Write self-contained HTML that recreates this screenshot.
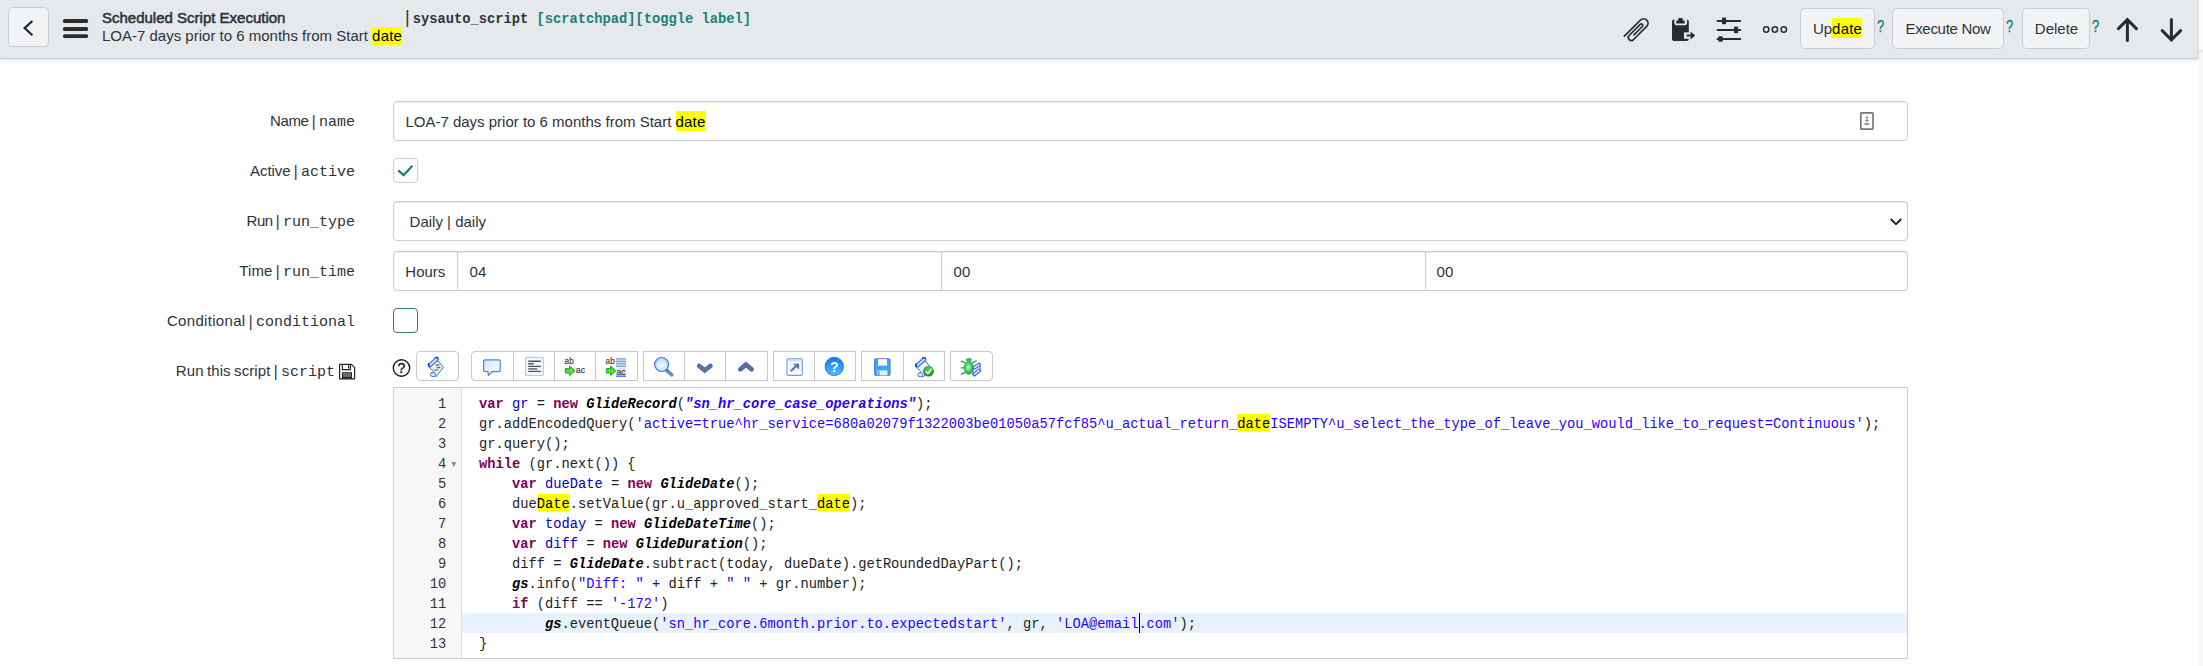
<!DOCTYPE html>
<html lang="en">
<head>
<meta charset="utf-8">
<title>Scheduled Script Execution</title>
<style>
*{box-sizing:border-box;margin:0;padding:0}
html,body{width:2203px;height:666px;overflow:hidden;background:#fff}
body{position:relative;font-family:"Liberation Sans",sans-serif;font-size:15px;color:#2e3338}
.abs{position:absolute}
.mono{font-family:"Liberation Mono",monospace}
mark{background:#ffff00;color:#000;padding:0 0 1px;letter-spacing:.2px}
/* scrollbar strip */
#sbar{left:2198px;top:0;width:5px;height:666px;background:#fafafa}
#sbar i{position:absolute;left:0;top:50px;width:5px;height:616px;background:linear-gradient(#e4e4e4,#f8f8f8 4px,#f8f8f8)}
/* header */
#hdr{left:0;top:0;width:2198px;height:59px;background:#e6e9eb;border-right:1px solid #d6dadd;border-bottom:1px solid #c9c9c9;box-shadow:0 1px 3px rgba(0,0,0,.12)}
.btn{position:absolute;top:8px;height:41px;border:1px solid #cbcdd0;border-radius:4.5px;background:#f2f3f5;color:#2e3338;font-size:15px;line-height:40px;text-align:center;white-space:nowrap}
#back{left:8px;top:7px;width:41px;height:40px}
.q{position:absolute;top:17.4px;color:#207f79;font-size:17px;-webkit-text-stroke:.45px #207f79;line-height:20px;transform:scaleX(.76);transform-origin:0 0}
.btn mark{padding:2px 0 1px}
.ttl{left:102px;top:7.8px;font-size:15px;font-weight:normal;-webkit-text-stroke:.55px #2e3338;line-height:20px;letter-spacing:0px;color:#2e3338;white-space:nowrap}
.sub{left:102px;top:25.7px;font-size:15px;line-height:20px;white-space:nowrap}
.sub mark{padding:0 0 1.5px}
.tbl{left:412.7px;top:9.7px;font-size:13.75px;line-height:20px;font-weight:bold;white-space:pre;color:#2e3338}
.tbl b{color:#207f79}
.sep{left:405px;top:7px;font-size:18px;line-height:20px;color:#2e3338}
/* form */
.lbl{position:absolute;right:1848px;height:20px;line-height:20px;white-space:nowrap;font-size:15px;color:#2e3338}
.lbl{word-spacing:-.9px}
.lbl .mono{font-size:15px;letter-spacing:0}
.bar{display:inline-block;font-style:normal;transform:scaleY(1.14) translateY(.3px)}
.inp{position:absolute;left:393px;width:1515px;height:40px;border:1px solid #c9cdd0;border-radius:4px;background:#fff;line-height:40px;white-space:nowrap;box-shadow:inset 0 1px 1px rgba(0,0,0,.07)}
.inp mark{padding:1.8px 0 .7px}
.seg{position:absolute;top:0;height:38px;border-right:1px solid #c9cdd0;padding-left:11.6px;line-height:40px}
.cb{position:absolute;left:393px;width:25px;height:25px;border:1px solid #c9cdd0;border-radius:4px;background:#fff}
/* editor */
#ed{left:393px;top:387px;width:1515px;height:272px;border:1px solid #cecece;background:#fff;overflow:hidden}
#gut{position:absolute;left:0;top:0;width:68px;height:270px;background:#f7f7f7;border-right:1px solid #ddd}
.ln{position:absolute;left:0;width:1513px;height:20px;line-height:20px;font-family:"Liberation Mono",monospace;font-size:13.745px;white-space:pre;color:#222}
.ln .n{position:absolute;left:0;top:1.7px;width:52.3px;text-align:right;color:#333}
.ln .c{position:absolute;left:85px;top:1.7px}
.ln mark{letter-spacing:0;padding:3px 0 0;background:linear-gradient(#ff0,#ff0) no-repeat 0 0/100% 17.7px}
.ln.act::before{content:"";position:absolute;left:68px;top:0;width:1445px;height:20px;background:#e8f2ff}
.ln .f{position:absolute;left:57.3px;top:1px;font-size:10px;color:#8a8a8a;font-family:"DejaVu Sans",sans-serif}
.cur{position:absolute;display:inline-block;width:0;height:19.8px;border-left:1.3px solid #000;top:-1.7px;margin-left:.7px}
.k{color:#7f0055;font-weight:bold}
.v{color:#0000c0}
.s{color:#2a00ff}
.g{font-weight:bold;font-style:italic;color:#000}
.gs{font-weight:bold;font-style:italic;color:#2a00ff}
.tb{position:absolute;top:351px;height:30px;border:1px solid #c8c8c8;border-radius:4px;background:#fff}
</style>
</head>
<body>
<div id="sbar" class="abs"><i></i></div>

<header id="hdr" class="abs">
  <div id="back" class="btn"></div>
  <svg class="abs" style="left:0;top:0" width="2198" height="58" viewBox="0 0 2198 58" fill="none" stroke="#2b2b2b" stroke-linecap="round" stroke-linejoin="miter">
    <!-- back chevron -->
    <path d="M32.4 21 L24.6 28.1 L32.4 35.2" stroke="#1f2430" stroke-width="2.1" stroke-linecap="butt"/>
    <!-- hamburger -->
    <g stroke="none" fill="#2b2b2b"><rect x="63" y="19.1" width="25.1" height="3.9" rx="1.6"/><rect x="63" y="27.1" width="25.1" height="3.9" rx="1.6"/><rect x="63" y="34.2" width="25.1" height="3.9" rx="1.6"/></g>
    <!-- paperclip -->
    <path d="M1623.95 35.45 L1640.00 19.40 A4.45 4.45 0 0 1 1646.30 25.70 L1632.95 39.05 A3.01 3.01 0 0 1 1628.70 34.80 L1639.85 23.65 A1.50 1.50 0 0 1 1641.97 25.78 L1633.53 34.22" stroke-width="1.7" transform="translate(.4 .7)"/>
    <!-- clipboard -->
    <g stroke="none" fill="#2b2b2b">
      <rect x="1672" y="19.6" width="16.8" height="21.3" rx="2"/>
      <path d="M1674.3 19 h12.8 v3.4 a2.9 2.9 0 0 1 -2.9 2.9 h-7 a2.9 2.9 0 0 1 -2.9 -2.9 z" fill="#e6e9eb"/>
      <path d="M1676.3 20.4 h1.9 v-1.2 a1.3 1.3 0 0 1 1.3 -1.3 h2 a1.3 1.3 0 0 1 1.3 1.3 v1.2 h1.9 v3.1 h-8.4 z"/>
      <rect x="1684" y="32.4" width="5.2" height="6.4" fill="#e6e9eb"/>
      <rect x="1686.6" y="34.5" width="5" height="2"/>
      <path d="M1690.6 31.6 L1695.2 35.5 L1690.6 39.4 z"/>
    </g>
    <!-- sliders -->
    <path d="M1717.6 21H1740.2M1717.6 30H1740.2M1717.6 39H1740.2" stroke-width="2.1"/>
    <g stroke="none" fill="#2b2b2b">
      <rect x="1722" y="17.6" width="4.1" height="6.6"/>
      <rect x="1734" y="26.7" width="4.1" height="6.4"/>
      <rect x="1718.4" y="36.3" width="4.3" height="5.4"/>
    </g>
    <!-- more dots -->
    <g stroke-width="1.5"><circle cx="1766.2" cy="29.5" r="2.7"/><circle cx="1774.9" cy="29.5" r="2.7"/><circle cx="1783.8" cy="29.5" r="2.7"/></g>
    <!-- up / down arrows -->
    <g stroke-width="3">
      <path d="M2127.4 20.5V40.4"/><path d="M2118.4 28.6L2127.4 19.6L2136.4 28.6"/>
      <path d="M2171.4 19.5V39.5"/><path d="M2162.2 30.6L2171.4 39.8L2180.6 30.6"/>
    </g>
  </svg>
  <div class="abs ttl">Scheduled Script Execution</div>
  <div class="abs sub">LOA-7 days prior to 6 months from Start <mark>date</mark></div>
  <span class="abs sep">|</span><div class="abs tbl mono">sysauto_script <b>[scratchpad][toggle label]</b></div>
  <div class="btn" style="left:1800px;width:75px">Up<mark>date</mark></div>
  <span class="q" style="left:1877.3px">?</span>
  <div class="btn" style="left:1892px;width:112px;letter-spacing:-.3px">Execute Now</div>
  <span class="q" style="left:2006.4px">?</span>
  <div class="btn" style="left:2022px;width:68px;padding-left:1px">Delete</div>
  <span class="q" style="left:2092.3px">?</span>
</header>

<main>
  <label class="lbl" style="top:111px"><span style="letter-spacing:-.4px">Name</span> <i class="bar">|</i> <span class="mono">name</span></label>
  <div class="inp" style="top:101px;padding-left:11.4px">LOA-7 days prior to 6 months from Start <mark>date</mark><svg class="abs" style="left:1465.1px;top:9.2px" width="16" height="20" viewBox="0 0 16 20"><rect x="1.8" y="1.9" width="12.2" height="16.2" rx="1" fill="#fff" stroke="#777" stroke-width="1.7"/><circle cx="7.9" cy="6.6" r="1.1" fill="#777"/><path d="M5.9 10.2 Q7.9 6.4 9.9 10.2 Z" fill="#777"/><rect x="5.4" y="11.8" width="5" height="2.3" fill="#999"/></svg></div>

  <label class="lbl" style="top:161px"><span style="letter-spacing:-.07px">Active</span> <i class="bar">|</i> <span class="mono">active</span></label>
  <div class="cb" style="top:158px"><svg class="abs" style="left:0;top:0" width="23" height="23" viewBox="394 159 23 23"><path d="M398.2 170.4 L403.6 175.2 L412.4 165.8" fill="none" stroke="#1a7f78" stroke-width="2.3"/></svg></div>

  <label class="lbl" style="top:211px"><span style="letter-spacing:-.53px">Run</span> <i class="bar">|</i> <span class="mono">run_type</span></label>
  <div class="inp" style="top:201px;padding-left:15.6px">Daily | daily<svg class="abs" style="left:1494px;top:15px" width="16" height="10" viewBox="1888 217 16 10"><path d="M1890.7 219 L1896 224.2 L1901.3 219" fill="none" stroke="#262626" stroke-width="2"/></svg></div>

  <label class="lbl" style="top:261px"><span style="letter-spacing:.1px">Time</span> <i class="bar">|</i> <span class="mono">run_time</span></label>
  <div class="inp" style="top:251px"><span class="seg" style="left:0;width:64px;padding-left:11.3px">Hours</span><span class="seg" style="left:64px;width:484px">04</span><span class="seg" style="left:548px;width:484px">00</span><span class="seg" style="left:1031px;width:482px;border-right:0">00</span></div>

  <label class="lbl" style="top:311px"><span style="letter-spacing:.32px">Conditional</span> <i class="bar">|</i> <span class="mono">conditional</span></label>
  <div class="cb" style="top:308px;border-color:#278080"></div>

  <label class="lbl" style="top:361px;right:1868px"><span style="letter-spacing:.1px">Run this script</span> <i class="bar">|</i> <span class="mono">script</span></label>
  <svg class="abs" style="left:338px;top:363px" width="18" height="17" viewBox="338 363 18 17"><path d="M339.6 364.4 H351.4 L354.6 367.4 V378.8 H339.6 Z" fill="#fff" stroke="#222" stroke-width="1.2" stroke-linejoin="round"/><path d="M342.4 364.6 V369.6 H350.4 V364.6" fill="none" stroke="#222" stroke-width="1.1"/><rect x="348" y="365.4" width="1.2" height="3" fill="#222"/><rect x="342" y="372.2" width="10" height="6.4" fill="#222"/><path d="M343 374H351M343 376H351" stroke="#fff" stroke-width=".7"/></svg>

  <div id="toolbar"><span class="tb" style="left:416px;width:43px;border-radius:4px"></span><span class="tb" style="left:471px;width:43px;border-radius:4px 0 0 4px"></span><span class="tb" style="left:513px;width:42px;border-radius:0"></span><span class="tb" style="left:554px;width:42px;border-radius:0"></span><span class="tb" style="left:595px;width:43px;border-radius:0"></span><span class="tb" style="left:643px;width:42px;border-radius:0"></span><span class="tb" style="left:684px;width:42px;border-radius:0"></span><span class="tb" style="left:725px;width:43px;border-radius:0"></span><span class="tb" style="left:773px;width:42px;border-radius:0"></span><span class="tb" style="left:814px;width:42px;border-radius:0"></span><span class="tb" style="left:861px;width:43px;border-radius:0"></span><span class="tb" style="left:903px;width:42px;border-radius:0"></span><span class="tb" style="left:950px;width:43px;border-radius:0 4px 4px 0"></span></div>
  <svg class="abs" style="left:390px;top:345px" width="620" height="45" viewBox="390 345 620 45" font-family="Liberation Sans, sans-serif">
    <defs>
      <radialGradient id="lens" cx="50%" cy="55%" r="55%"><stop offset="0" stop-color="#fff"/><stop offset=".55" stop-color="#d3e9ff"/><stop offset="1" stop-color="#9ccaf8"/></radialGradient>
      <linearGradient id="hb" x1="0" y1="0" x2="0" y2="1"><stop offset="0" stop-color="#1573ee"/><stop offset="1" stop-color="#52bdff"/></linearGradient>
      <linearGradient id="bub" x1="0" y1="0" x2="1" y2="1"><stop offset="0" stop-color="#d5e5f7"/><stop offset="1" stop-color="#fff"/></linearGradient>
      <radialGradient id="bug" cx="45%" cy="45%" r="60%"><stop offset="0" stop-color="#d6ffd6"/><stop offset=".5" stop-color="#4fd75a"/><stop offset="1" stop-color="#12963a"/></radialGradient>
      <radialGradient id="ok" cx="50%" cy="35%" r="65%"><stop offset="0" stop-color="#5fd35f"/><stop offset="1" stop-color="#0f8a10"/></radialGradient>
    </defs>
    <!-- help ring -->
    <circle cx="401.5" cy="368" r="8.2" fill="#fff" stroke="#1d1d1d" stroke-width="1.4"/>
    <text x="401.5" y="373" text-anchor="middle" font-size="14" fill="#1d1d1d" stroke="#1d1d1d" stroke-width=".4">?</text>
    <!-- 1 script -->
    <g transform="translate(0 0)">
      <path d="M434.4 360.2 L438.8 361.6 L443.2 367.3 L436.2 376.6 L431 374 L433.6 371.4 L428.6 366.6 Z" fill="#edf3fe" stroke="#3f72ea" stroke-width="1" stroke-linejoin="round"/>
      <path d="M430.2 365 L436.9 358.9" stroke="#2f62e4" stroke-width="4.3" stroke-linecap="round"/>
      <path d="M430.6 364.7 L436.6 359.2" stroke="#c9dafc" stroke-width="2.3" stroke-linecap="round"/>
      <path d="M428.5 363.2 L428.5 366.6" stroke="#1546d2" stroke-width="1.5"/>
      <path d="M434.8 357.5 L438 357.9" stroke="#0f3fd0" stroke-width="1.2"/>
      <ellipse cx="433.1" cy="374.5" rx="2.6" ry="2.1" fill="#dfe9fd" stroke="#3f72ea" stroke-width="1"/>
    </g>
    <rect x="435.8" y="364.1" width="3.6" height="1.7" fill="#3fbf3f"/>
    <rect x="436.6" y="366.8" width="3.8" height="1.5" fill="#e8381a"/>
    <rect x="434.2" y="369.3" width="3.8" height="1.6" fill="#3fbf3f"/>
    <!-- 2 comment -->
    <path d="M485 359.9 h13.8 a1.4 1.4 0 0 1 1.4 1.4 v9 a1.4 1.4 0 0 1 -1.4 1.4 h-6.6 l-3.8 3.6 l-0.4 -3.6 h-3 a1.4 1.4 0 0 1 -1.4 -1.4 v-9 a1.4 1.4 0 0 1 1.4 -1.4 z" fill="url(#bub)" stroke="#4a86cc" stroke-width="1.2" stroke-linejoin="round"/>
    <!-- 3 align -->
    <rect x="525.5" y="357.3" width="18" height="18.2" rx="1.6" fill="#f1f6ff" stroke="#b4cbfb" stroke-width="1.2"/>
    <path d="M528.2 361.2H540.8M528.2 363.8H533.8M528.2 366.4H541M528.2 368.9H537.4M528.2 371.4H541.2" stroke="#505458" stroke-width="1.4"/>
    <!-- 4 replace -->
    <text x="564.6" y="364" font-size="9.7" fill="#4a4a4a" stroke="#4a4a4a" stroke-width=".25" textLength="9.2" lengthAdjust="spacingAndGlyphs">ab</text>
    <text x="575.8" y="373" font-size="9.7" fill="#4a4a4a" stroke="#4a4a4a" stroke-width=".25" textLength="9.2" lengthAdjust="spacingAndGlyphs">ac</text>
    <path id="garr" d="M565.4 368.6 h4.2 v-2.6 l5.2 4.8 l-5.2 4.8 v-2.6 h-4.2 z" fill="#4fe03a" stroke="#1aa01a" stroke-width="1" stroke-linejoin="round"/>
    <!-- 5 replace all -->
    <text x="605.6" y="364" font-size="9.7" fill="#4a4a4a" stroke="#4a4a4a" stroke-width=".25" textLength="9.2" lengthAdjust="spacingAndGlyphs">ab</text>
    <rect x="616" y="358.3" width="10" height="9" fill="#dbe8fa"/>
    <path d="M616 358.9H626M616 361.3H626M616 363.7H626M616 366.1H626" stroke="#6f9fdc" stroke-width="1.2"/>
    <rect x="616" y="367.4" width="10" height="8.4" fill="#dde9f8"/>
    <path d="M616 376.2H626" stroke="#2a6aff" stroke-width="1.2"/>
    <text x="616.4" y="374.6" font-size="9.7" fill="#4a4a4a" stroke="#4a4a4a" stroke-width=".25" textLength="9.4" lengthAdjust="spacingAndGlyphs">ac</text>
    <path d="M606.4 368.6 h4.2 v-2.6 l5.2 4.8 l-5.2 4.8 v-2.6 h-4.2 z" fill="#4fe03a" stroke="#1aa01a" stroke-width="1" stroke-linejoin="round"/>
    <!-- 6 search -->
    <path d="M667 370.6 L671.8 374.9" stroke="#5a93dc" stroke-width="3.6" stroke-linecap="round"/>
    <path d="M666.2 369.8 L667.8 371.2" stroke="#6e7a88" stroke-width="3.6"/>
    <circle cx="661.6" cy="364.5" r="7" fill="url(#lens)" stroke="#3f80d2" stroke-width="1.2"/>
    <!-- 7,8 chevrons -->
    <path d="M699.2 366 L704.8 370.4 L710.4 366" fill="none" stroke="#2f72d4" stroke-width="4.6" stroke-linecap="round" stroke-linejoin="miter"/>
    <path d="M699.2 366 L704.8 370.4 L710.4 366" fill="none" stroke="#6c7076" stroke-width="2.4" stroke-linecap="round" stroke-linejoin="miter"/>
    <path d="M740.4 369.2 L746 364.6 L751.6 369.2" fill="none" stroke="#2f72d4" stroke-width="4.6" stroke-linecap="round" stroke-linejoin="miter"/>
    <path d="M740.4 369.2 L746 364.6 L751.6 369.2" fill="none" stroke="#6c7076" stroke-width="2.4" stroke-linecap="round" stroke-linejoin="miter"/>
    <!-- 9 popout -->
    <rect x="787" y="358.9" width="15.2" height="16.4" rx="1" fill="#fff" stroke="#6b9cf2" stroke-width="1.2"/>
    <rect x="787.6" y="359.5" width="14" height="2" fill="#cfe3fb"/>
    <rect x="789" y="363" width="9" height="8" fill="#e3ecf7" opacity=".7"/>
    <path d="M790.8 371.2 L796.4 365.8" stroke="#4c72a8" stroke-width="1.9"/>
    <path d="M793.2 363.7 H799.1 V369.6 Z" fill="#4c72a8"/>
    <!-- 10 help -->
    <circle cx="834.3" cy="366.4" r="9.2" fill="url(#hb)" stroke="#1b63dd" stroke-width=".8"/>
    <text x="834.3" y="371.6" text-anchor="middle" font-size="14" font-weight="bold" fill="#fff">?</text>
    <!-- 11 save -->
    <rect x="874.6" y="358.8" width="15.4" height="16.6" rx="1.6" fill="#3aa7fb" stroke="#4f7fe4" stroke-width="1.2"/>
    <rect x="878" y="359.2" width="9" height="6.4" fill="#fff"/>
    <rect x="877.4" y="370.4" width="10" height="5" fill="#e4effc"/>
    <rect x="878.3" y="371.2" width="1.1" height="4.2" fill="#4a63d8"/>
    <!-- 12 script ok -->
    <g transform="translate(487.3 0.3)">
      <path d="M434.4 360.2 L438.8 361.6 L443.2 367.3 L436.2 376.6 L431 374 L433.6 371.4 L428.6 366.6 Z" fill="#edf3fe" stroke="#3f72ea" stroke-width="1" stroke-linejoin="round"/>
      <path d="M430.2 365 L436.9 358.9" stroke="#2f62e4" stroke-width="4.3" stroke-linecap="round"/>
      <path d="M430.6 364.7 L436.6 359.2" stroke="#c9dafc" stroke-width="2.3" stroke-linecap="round"/>
      <path d="M428.5 363.2 L428.5 366.6" stroke="#1546d2" stroke-width="1.5"/>
      <path d="M434.8 357.5 L438 357.9" stroke="#0f3fd0" stroke-width="1.2"/>
      <ellipse cx="433.1" cy="374.5" rx="2.6" ry="2.1" fill="#dfe9fd" stroke="#3f72ea" stroke-width="1"/>
    </g>
    <circle cx="928.5" cy="371.2" r="5.4" fill="url(#ok)"/>
    <path d="M925.6 371.2 L927.9 373.6 L931.6 368.8" fill="none" stroke="#fff" stroke-width="1.5"/>
    <!-- 13 debug -->
    <g stroke="#1e9e48" stroke-width="1.3" fill="none" stroke-linecap="round">
      <path d="M961.4 361.2 L965 362.8M961.4 367.8 H964.2M961.4 374.2 L965 372.6M976.2 361 L972.6 362.6M976.4 367.8 H973.4"/>
    </g>
    <rect x="966.2" y="358.2" width="5.4" height="3.4" rx="1.3" fill="#25a555"/>
    <rect x="966.8" y="359.6" width="4.2" height="1" fill="#58c47c"/>
    <ellipse cx="968.8" cy="367.9" rx="4.6" ry="6.3" fill="url(#bug)" stroke="#1fa24a" stroke-width=".8"/>
    <g>
      <path d="M973.2 369 L980 364.6 L980.4 371 L974.6 376 L972.8 375 Z" fill="#e3ecfd" stroke="#3f72ea" stroke-width=".9" stroke-linejoin="round"/>
      <path d="M974.2 367.6 L979 364.6" stroke="#2f62e4" stroke-width="3.8" stroke-linecap="round"/>
      <path d="M974.5 367.4 L978.8 364.8" stroke="#c9dafc" stroke-width="1.9" stroke-linecap="round"/>
      <path d="M974.2 374.4 L979.2 370.4" stroke="#2f62e4" stroke-width="3.8" stroke-linecap="round"/>
      <path d="M974.5 374.2 L979 370.6" stroke="#c9dafc" stroke-width="1.9" stroke-linecap="round"/>
    </g>
  </svg>
  <div id="ed" class="abs">
    <div id="gut"></div>
    <div class="ln" style="top:5px"><span class="n">1</span><span class="c"><span class="k">var</span> <span class="v">gr</span> = <span class="k">new</span> <span class="g">GlideRecord</span>(<span class="gs">"sn_hr_core_case_operations"</span>);</span></div>
    <div class="ln" style="top:25px"><span class="n">2</span><span class="c">gr.addEncodedQuery(<span class="s">'active=true^hr_service=680a02079f1322003be01050a57fcf85^u_actual_return_<mark>date</mark>ISEMPTY^u_select_the_type_of_leave_you_would_like_to_request=Continuous'</span>);</span></div>
    <div class="ln" style="top:45px"><span class="n">3</span><span class="c">gr.query();</span></div>
    <div class="ln" style="top:65px"><span class="n">4</span><span class="f">▾</span><span class="c"><span class="k">while</span> (gr.next()) {</span></div>
    <div class="ln" style="top:85px"><span class="n">5</span><span class="c">    <span class="k">var</span> <span class="v">dueDate</span> = <span class="k">new</span> <span class="g">GlideDate</span>();</span></div>
    <div class="ln" style="top:105px"><span class="n">6</span><span class="c">    due<mark>Date</mark>.setValue(gr.u_approved_start_<mark>date</mark>);</span></div>
    <div class="ln" style="top:125px"><span class="n">7</span><span class="c">    <span class="k">var</span> <span class="v">today</span> = <span class="k">new</span> <span class="g">GlideDateTime</span>();</span></div>
    <div class="ln" style="top:145px"><span class="n">8</span><span class="c">    <span class="k">var</span> <span class="v">diff</span> = <span class="k">new</span> <span class="g">GlideDuration</span>();</span></div>
    <div class="ln" style="top:165px"><span class="n">9</span><span class="c">    diff = <span class="g">GlideDate</span>.subtract(today, dueDate).getRoundedDayPart();</span></div>
    <div class="ln" style="top:185px"><span class="n">10</span><span class="c">    <span class="g">gs</span>.info(<span class="s">"Diff: "</span> + diff + <span class="s">" "</span> + gr.number);</span></div>
    <div class="ln" style="top:205px"><span class="n">11</span><span class="c">    <span class="k">if</span> (diff == <span class="s">'-172'</span>)</span></div>
    <div class="ln act" style="top:225px"><span class="n">12</span><span class="c">        <span class="g">gs</span>.eventQueue(<span class="s">'sn_hr_core.6month.prior.to.expectedstart'</span>, gr, <span class="s">'LOA@email<i class="cur"></i>.com'</span>);</span></div>
    <div class="ln" style="top:245px"><span class="n">13</span><span class="c">}</span></div>
  </div>
</main>
</body>
</html>
